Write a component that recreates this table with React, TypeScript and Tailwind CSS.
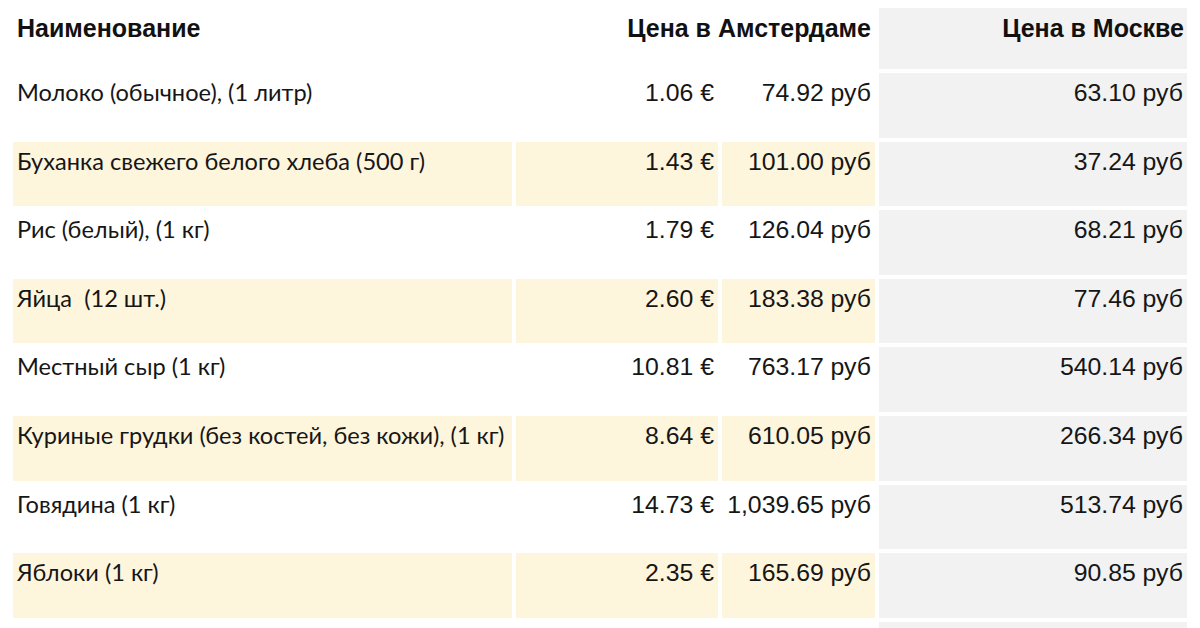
const rows = [
  { name: "Молоко (обычное), (1 литр)", eur: "1.06 €", rub: "74.92 руб", msk: "63.10 руб" },
  { name: "Буханка свежего белого хлеба (500 г)", eur: "1.43 €", rub: "101.00 руб", msk: "37.24 руб" },
  { name: "Рис (белый), (1 кг)", eur: "1.79 €", rub: "126.04 руб", msk: "68.21 руб" },
  { name: "Яйца  (12 шт.)", eur: "2.60 €", rub: "183.38 руб", msk: "77.46 руб" },
  { name: "Местный сыр (1 кг)", eur: "10.81 €", rub: "763.17 руб", msk: "540.14 руб" },
  { name: "Куриные грудки (без костей, без кожи), (1 кг)", eur: "8.64 €", rub: "610.05 руб", msk: "266.34 руб" },
  { name: "Говядина (1 кг)", eur: "14.73 €", rub: "1,039.65 руб", msk: "513.74 руб" },
  { name: "Яблоки (1 кг)", eur: "2.35 €", rub: "165.69 руб", msk: "90.85 руб" },
  { name: "", eur: "", rub: "", msk: "" },
];

// Arial-metric numbers and headings
const num =
  "[font-family:Liberation_Sans,Arial,sans-serif] text-[24.8px] leading-[28px] text-right pt-[6px] pr-[4px] text-[#161616]";
const head =
  "[font-family:Liberation_Sans,Arial,sans-serif] font-bold text-[25px] leading-[28px] pt-[6px] text-[#111]";

export default function App() {
  return (
    <div className="w-[1200px] h-[628px] overflow-hidden bg-white pl-[13px] pt-[8px]">
      <div className="grid grid-cols-[499px_202px_153px_308px] gap-x-[4px] gap-y-[4px] auto-rows-[64.6px] grid-rows-[61px]">
        <div className={`${head} pl-[4px]`}>Наименование</div>
        <div className={`${head} col-span-2 text-right pr-[4px]`}>Цена в Амстердаме</div>
        <div className={`${head} bg-[#f2f2f2] text-right pr-[3px]`}>Цена в Москве</div>

        {rows.map((r, i) => {
          const bg = i % 2 === 1 ? "bg-[#fef5dd]" : "bg-white";
          return [
            <div
              key={`n${i}`}
              className={`${bg} [font-family:Lato,Noto_Sans,sans-serif] text-[23.6px] leading-[28px] pt-[5px] pl-[4px] text-[#161616] whitespace-pre`}
            >
              {r.name}
            </div>,
            <div key={`e${i}`} className={`${bg} ${num}`}>{r.eur}</div>,
            <div key={`r${i}`} className={`${bg} ${num}`}>{r.rub}</div>,
            <div key={`m${i}`} className={`bg-[#f2f2f2] ${num}`}>{r.msk}</div>,
          ];
        })}
      </div>
    </div>
  );
}
